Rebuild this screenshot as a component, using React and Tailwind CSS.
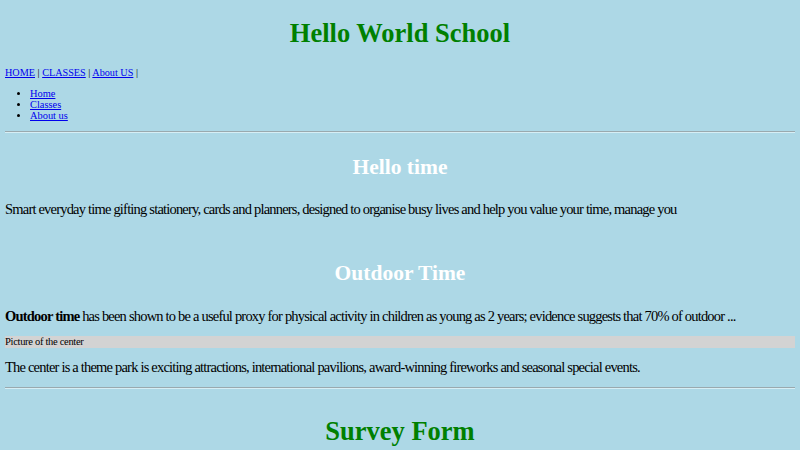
export default function App() {
  return (
    <div className="flow-root min-h-screen bg-[#add8e6] px-[5px] pb-8 font-['Liberation_Serif',serif] text-black">
      <h1 className="mt-[18px] text-center text-[26.5px] leading-[30px] font-bold text-[#008000]">
        Hello World School
      </h1>

      <nav className="mt-[19px] text-[10.2px] leading-[12px]">
        <a href="#" className="text-[#0000ee] underline">HOME</a> |{" "}
        <a href="#" className="text-[#0000ee] underline">CLASSES</a> |{" "}
        <a href="#" className="text-[#0000ee] underline">About US</a> |
      </nav>

      <ul className="mt-[9px] list-disc pl-[25px] text-[10.4px] leading-[11px]">
        <li><a href="#" className="text-[#0000ee] underline">Home</a></li>
        <li><a href="#" className="text-[#0000ee] underline">Classes</a></li>
        <li><a href="#" className="text-[#0000ee] underline">About us</a></li>
      </ul>

      <hr className="mt-[10px] border-t border-b border-t-[#9aa9ae] border-b-[#d6eef5]" />

      <h2 className="mt-[22px] text-center text-[21.5px] leading-[25px] font-bold text-white">Hello time</h2>
      <p className="mt-[22px] text-[14.5px] leading-[15px] tracking-[-0.8px]">
        Smart everyday time gifting stationery, cards and planners, designed to organise busy lives and help you value your time, manage you
      </p>

      <h2 className="mt-[44px] text-center text-[21.5px] leading-[25px] font-bold text-white">Outdoor Time</h2>
      <p className="mt-[23px] text-[14.5px] leading-[15px] tracking-[-0.8px]">
        <b>Outdoor time</b> has been shown to be a useful proxy for physical activity in children as young as 2 years; evidence suggests that 70% of outdoor ...
      </p>
      <div className="mt-[12px] h-[12px] bg-[#d3d3d3] text-[10.5px] leading-[12px] tracking-[-0.3px]">Picture of the center</div>
      <p className="mt-[12px] text-[14.5px] leading-[15px] tracking-[-0.8px]">
        The center is a theme park is exciting attractions, international pavilions, award-winning fireworks and seasonal special events.
      </p>

      <hr className="mt-[12px] border-t border-b border-t-[#9aa9ae] border-b-[#d6eef5]" />

      <h1 className="mt-[27px] text-center text-[26.5px] leading-[30px] font-bold text-[#008000]">Survey Form</h1>
    </div>
  );
}
